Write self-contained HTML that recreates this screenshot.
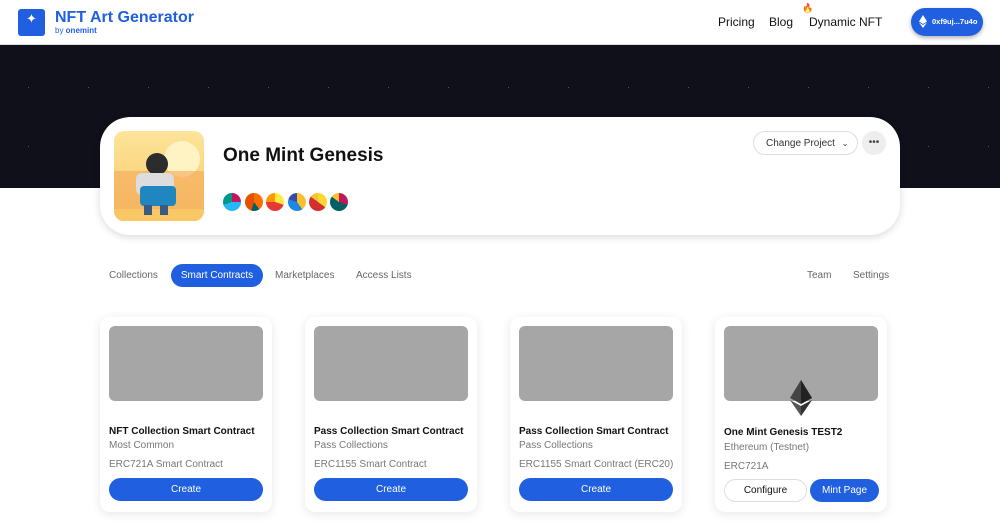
<!DOCTYPE html>
<html><head><style>
*{margin:0;padding:0;box-sizing:border-box}
body{width:1000px;height:531px;overflow:hidden;background:#fff;font-family:"Liberation Sans",sans-serif;position:relative;color:#111}
.hdr{position:absolute;left:0;top:0;width:1000px;height:45px;background:#fff;border-bottom:1px solid #ddd}
.logo{position:absolute;left:18px;top:9px;width:27px;height:27px;background:#1f5fe0;border-radius:3px;color:#fff;font-size:13px;text-align:center;line-height:20px}
.lt{position:absolute;left:55px;top:9px;font-size:16px;font-weight:bold;color:#1f5fe0}
.ls{position:absolute;left:55px;top:26px;font-size:8px;color:#1f5fe0}
.nav{position:absolute;top:15px;font-size:12px;color:#111}
.wal{position:absolute;left:911px;top:8px;width:72px;height:28px;background:#1f5fe0;border-radius:14px;color:#fff;font-size:7.5px;font-weight:bold;line-height:28px;padding-left:21px;box-shadow:0 2px 4px rgba(0,0,0,.3)}
.band{position:absolute;left:0;top:45px;width:1000px;height:143px;background:#0f101a}
.st{position:absolute;width:1px;height:1px;background:#556}
.pc{position:absolute;left:100px;top:117px;width:800px;height:118px;background:#fff;border-radius:30px;box-shadow:0 2px 8px rgba(0,0,0,.15)}
.av{position:absolute;left:14px;top:14px;width:90px;height:90px;border-radius:10px;background:linear-gradient(#fde49a,#f9c766);overflow:hidden}
.tt{position:absolute;left:123px;top:28px;font-size:19px;font-weight:bold}
.dot{position:absolute;top:76px;width:18px;height:18px;border-radius:50%}
.cp{position:absolute;left:653px;top:14px;width:105px;height:24px;border:1px solid #ddd;border-radius:12px;font-size:10px;color:#333;line-height:24px;padding-left:12px}
.mo{position:absolute;left:762px;top:14px;width:24px;height:24px;border-radius:50%;background:#eee;font-size:10px;text-align:center;line-height:24px;color:#444}
.tab{position:absolute;top:270px;font-size:10px;color:#666}
.tabA{position:absolute;left:171px;top:264px;width:92px;height:23px;background:#1f5fe0;border-radius:12px;color:#fff;font-size:10px;text-align:center;line-height:23px}
.card{position:absolute;top:317px;width:172px;height:195px;background:#fff;border-radius:10px;box-shadow:0 2px 10px rgba(0,0,0,.1)}
.img{position:absolute;left:9px;top:9px;width:154px;height:75px;background:#a6a6a6;border-radius:6px}
.ct{position:absolute;left:9px;top:109px;font-size:10px;font-weight:bold}
.cs{position:absolute;left:9px;top:123px;font-size:10px;color:#777}
.ce{position:absolute;left:9px;top:142px;font-size:10px;color:#777}
.btn{position:absolute;left:9px;top:161px;width:154px;height:23px;background:#1f5fe0;border-radius:12px;color:#fff;font-size:10px;text-align:center;line-height:23px}
</style></head><body>
<div class="hdr">
<div class="logo">✦</div>
<div class="lt">NFT Art Generator</div>
<div class="ls">by <b>onemint</b></div>
<div class="nav" style="left:718px">Pricing</div>
<div class="nav" style="left:769px">Blog</div>
<div class="nav" style="left:809px">Dynamic NFT</div>
<div style="position:absolute;left:802px;top:3px;font-size:9px">🔥</div>
<div class="wal"><svg style="position:absolute;left:8px;top:7px" width="8" height="13" viewBox="0 0 8 13"><path d="M4 0L0 6.5 4 9 8 6.5z M0 7.5L4 13 8 7.5 4 10z" fill="#fff"/></svg>0xf9uj...7u4o</div>
</div>
<div class="band">
<div class="st" style="left:28px;top:42px"></div><div class="st" style="left:88px;top:42px"></div><div class="st" style="left:148px;top:42px"></div><div class="st" style="left:208px;top:42px"></div><div class="st" style="left:268px;top:42px"></div><div class="st" style="left:328px;top:42px"></div><div class="st" style="left:388px;top:42px"></div><div class="st" style="left:448px;top:42px"></div><div class="st" style="left:508px;top:42px"></div><div class="st" style="left:568px;top:42px"></div><div class="st" style="left:628px;top:42px"></div><div class="st" style="left:688px;top:42px"></div><div class="st" style="left:748px;top:42px"></div><div class="st" style="left:808px;top:42px"></div><div class="st" style="left:868px;top:42px"></div><div class="st" style="left:928px;top:42px"></div><div class="st" style="left:988px;top:42px"></div>
<div class="st" style="left:28px;top:101px"></div><div class="st" style="left:928px;top:101px"></div><div class="st" style="left:988px;top:101px"></div>
</div>
<div class="pc">
<div class="av">
<div style="position:absolute;left:50px;top:10px;width:36px;height:36px;border-radius:50%;background:#fff3c4"></div>
<div style="position:absolute;left:0;top:40px;width:90px;height:50px;background:#f4a95a;opacity:.6"></div>
<div style="position:absolute;left:0;top:78px;width:90px;height:12px;background:#f9c766"></div>
<div style="position:absolute;left:32px;top:22px;width:22px;height:22px;border-radius:50%;background:#2c2c2c"></div>
<div style="position:absolute;left:22px;top:42px;width:38px;height:22px;border-radius:6px;background:#ddd"></div>
<div style="position:absolute;left:26px;top:55px;width:36px;height:20px;border-radius:4px;background:#1f86c0"></div>
<div style="position:absolute;left:30px;top:74px;width:8px;height:10px;background:#3a5a80"></div>
<div style="position:absolute;left:46px;top:74px;width:8px;height:10px;background:#3a5a80"></div>
</div>
<div class="tt">One Mint Genesis</div>
<div class="dot" style="left:123px;background:conic-gradient(#c2185b 0 25%,#29b6f6 25% 70%,#009688 70%)"></div>
<div class="dot" style="left:145px;background:conic-gradient(#ff6d00 0 40%,#006064 40% 55%,#e65100 55%)"></div>
<div class="dot" style="left:166px;background:conic-gradient(#ffeb3b 0 30%,#e53935 30% 75%,#ff9800 75%)"></div>
<div class="dot" style="left:188px;background:conic-gradient(#fbc02d 0 40%,#1e88e5 40% 80%,#3949ab 80%)"></div>
<div class="dot" style="left:209px;background:conic-gradient(#fdd835 0 35%,#d32f2f 35% 85%,#fbc02d 85%)"></div>
<div class="dot" style="left:230px;background:conic-gradient(#c2185b 0 30%,#006064 30% 85%,#fbc02d 85%)"></div>
<div class="cp">Change Project <span style="font-size:8px;margin-left:4px">⌄</span></div>
<div class="mo">•••</div>
</div>
<div class="tab" style="left:109px">Collections</div>
<div class="tabA">Smart Contracts</div>
<div class="tab" style="left:275px">Marketplaces</div>
<div class="tab" style="left:356px">Access Lists</div>
<div class="tab" style="left:807px">Team</div>
<div class="tab" style="left:853px">Settings</div>

<div class="card" style="left:100px"><div class="img"></div><div class="ct">NFT Collection Smart Contract</div><div class="cs">Most Common</div><div class="ce">ERC721A Smart Contract</div><div class="btn">Create</div></div>
<div class="card" style="left:305px"><div class="img"></div><div class="ct">Pass Collection Smart Contract</div><div class="cs">Pass Collections</div><div class="ce">ERC1155 Smart Contract</div><div class="btn">Create</div></div>
<div class="card" style="left:510px"><div class="img"></div><div class="ct">Pass Collection Smart Contract</div><div class="cs">Pass Collections</div><div class="ce">ERC1155 Smart Contract (ERC20)</div><div class="btn">Create</div></div>
<div class="card" style="left:715px"><div class="img"></div>
<svg style="position:absolute;left:75px;top:63px" width="22" height="36" viewBox="0 0 22 36"><path d="M11 0L0 18 11 24 22 18z" fill="#444"/><path d="M11 0L11 24 22 18z" fill="#222"/><path d="M0 20L11 36 22 20 11 26z" fill="#555"/><path d="M11 26V36L22 20z" fill="#333"/></svg>
<div class="ct" style="top:110px">One Mint Genesis TEST2</div><div class="cs" style="top:125px">Ethereum (Testnet)</div><div class="ce" style="top:144px">ERC721A</div>
<div style="position:absolute;left:9px;top:162px;width:83px;height:23px;border:1px solid #ddd;border-radius:12px;font-size:10px;text-align:center;line-height:21px">Configure</div>
<div class="btn" style="left:95px;top:162px;width:69px">Mint Page</div></div>
</body></html>
